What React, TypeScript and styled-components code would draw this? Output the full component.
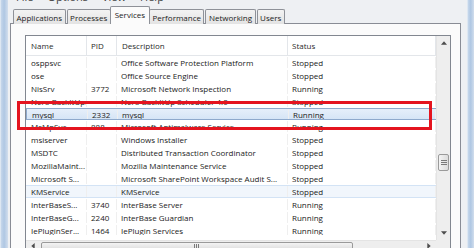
import styled, { createGlobalStyle, css } from "styled-components";

type Service = {
  name: string;
  pid: string;
  desc: string;
  status: string;
  state?: "selected" | "hover";
};

const services: Service[] = [
  { name: "osppsvc", pid: "", desc: "Office Software Protection Platform", status: "Stopped" },
  { name: "ose", pid: "", desc: "Office  Source Engine", status: "Stopped" },
  { name: "NisSrv", pid: "3772", desc: "Microsoft Network Inspection", status: "Running" },
  { name: "Nero BackItUp...", pid: "", desc: "Nero BackItUp Scheduler 4.0", status: "Stopped" },
  { name: "mysql", pid: "2332", desc: "mysql", status: "Running", state: "selected" },
  { name: "MsMpSvc", pid: "888", desc: "Microsoft Antimalware Service", status: "Running" },
  { name: "msiserver", pid: "", desc: "Windows Installer", status: "Stopped" },
  { name: "MSDTC", pid: "", desc: "Distributed Transaction Coordinator", status: "Stopped" },
  { name: "MozillaMaint...", pid: "", desc: "Mozilla Maintenance Service", status: "Stopped" },
  { name: "Microsoft S...", pid: "", desc: "Microsoft SharePoint Workspace Audit S...", status: "Stopped" },
  { name: "KMService", pid: "", desc: "KMService", status: "Stopped", state: "hover" },
  { name: "InterBaseS...", pid: "3740", desc: "InterBase Server", status: "Running" },
  { name: "InterBaseG...", pid: "2240", desc: "InterBase Guardian", status: "Running" },
  { name: "IePluginSer...", pid: "1464", desc: "IePlugin Services", status: "Running" },
];

const tabs = ["Applications", "Processes", "Services", "Performance", "Networking", "Users"];

const App = () => {
  return (
    <>
      <GlobalStyle />
      <Window>
        <FrameEdge $width={7} />
        <Main>
          <MenuStrip>
            <MenuItem>File</MenuItem>
            <MenuItem>Options</MenuItem>
            <MenuItem>View</MenuItem>
            <MenuItem>Help</MenuItem>
          </MenuStrip>
          <TabRow>
            {tabs.map((t) => (
              <Tab key={t} $active={t === "Services"}>
                {t}
              </Tab>
            ))}
          </TabRow>
          <Panel>
            <ListView>
              <ListArea>
                <HeaderRow>
                  <HeaderCell>Name</HeaderCell>
                  <HeaderCell>PID</HeaderCell>
                  <HeaderCell>Description</HeaderCell>
                  <HeaderCell>Status</HeaderCell>
                </HeaderRow>
                {services.map((s) => (
                  <Row key={s.name} $state={s.state}>
                    <Cell>{s.name}</Cell>
                    <Cell>{s.pid}</Cell>
                    <Cell>{s.desc}</Cell>
                    <Cell>{s.status}</Cell>
                  </Row>
                ))}
              </ListArea>
              <VScroll>
                <ArrowButton>
                  <Arrow viewBox="0 0 7 4">
                    <path d="M0 4 L3.5 0 L7 4 Z" />
                  </Arrow>
                </ArrowButton>
                <Track>
                  <VThumb>
                    <Grip viewBox="0 0 6 6">
                      <path d="M0 0.5 H6 M0 2.5 H6 M0 4.5 H6" />
                    </Grip>
                  </VThumb>
                </Track>
                <ArrowButton>
                  <Arrow viewBox="0 0 7 4">
                    <path d="M0 0 L7 0 L3.5 4 Z" />
                  </Arrow>
                </ArrowButton>
              </VScroll>
              <HScroll>
                <ArrowButton>
                  <SideArrow viewBox="0 0 4 7">
                    <path d="M4 0 L4 7 L0 3.5 Z" />
                  </SideArrow>
                </ArrowButton>
                <HThumb>
                  <Grip viewBox="0 0 6 6">
                    <path d="M0.5 0 V6 M2.5 0 V6 M4.5 0 V6" />
                  </Grip>
                </HThumb>
                <HTrack />
                <ArrowButton>
                  <SideArrow viewBox="0 0 4 7">
                    <path d="M0 0 L0 7 L4 3.5 Z" />
                  </SideArrow>
                </ArrowButton>
              </HScroll>
              <Corner />
            </ListView>
          </Panel>
        </Main>
        <FrameEdge $width={6} />
        {/* red annotation around the mysql row */}
        <Highlight />
      </Window>
    </>
  );
};

export default App;

const GlobalStyle = createGlobalStyle`
  html, body {
    margin: 0;
    padding: 0;
    overflow: hidden;
  }
  body {
    font-family: "Open Sans", "Noto Sans", sans-serif;
  }
`;

const Window = styled.div`
  position: relative;
  display: flex;
  width: 474px;
  height: 248px;
  overflow: hidden;
  background: #eef0f3;
  color: #222222;
  font-size: 8px;
`;

const FrameEdge = styled.div<{ $width: number }>`
  flex: 0 0 ${(p) => p.$width}px;
  background: linear-gradient(90deg, #c6d7eb 0%, #afc7e3 45%, #d2deed 100%);
  border-left: 1px solid #dde7f2;
`;

const Main = styled.div`
  flex: 1;
  min-width: 0;
  display: flex;
  flex-direction: column;
  padding: 0 6px 0 2px;
`;

const MenuStrip = styled.div`
  flex: none;
  height: 7px;
  overflow: hidden;
  display: flex;
  gap: 14px;
  padding-left: 6px;
`;

const MenuItem = styled.span`
  margin-top: -9px;
  font-size: 11px;
  line-height: 12px;
  color: #444;
`;

const TabRow = styled.div`
  flex: none;
  position: relative;
  z-index: 1;
  display: flex;
  align-items: flex-end;
  height: 17px;
  padding-left: 3px;
  margin-bottom: -1px;
`;

const Tab = styled.div<{ $active?: boolean }>`
  box-sizing: border-box;
  display: flex;
  align-items: center;
  height: 15px;
  padding: 0 2.5px;
  margin-right: 1px;
  border: 1px solid #8e9198;
  border-bottom: none;
  border-radius: 2px 2px 0 0;
  background: linear-gradient(#f3f3f3, #e3e3e3);
  white-space: nowrap;

  ${(p) =>
    p.$active &&
    css`
      height: 18px;
      margin: 0 0 0 -2px;
      padding: 0 4px 2px;
      background: #fbfbfb;
      & + div {
        margin-left: -1px;
      }
    `}
`;

const Panel = styled.div`
  flex: 1 0 auto;
  border: 1px solid #898c95;
  background: #fbfbfb;
  padding: 11px 9px 0 14px;
`;

const ListView = styled.div`
  box-sizing: border-box;
  height: 217px;
  display: grid;
  grid-template-columns: 1fr 14px;
  grid-template-rows: 1fr 11px;
  border: 1px solid #828790;
  background: #ffffff;
`;

const columns = "61px 30px 171px 1fr";

const ListArea = styled.div`
  overflow: hidden;
`;

const HeaderRow = styled.div`
  box-sizing: border-box;
  display: grid;
  grid-template-columns: ${columns};
  height: 20px;
  border-bottom: 1px solid #e3e6ea;
`;

const HeaderCell = styled.div`
  display: flex;
  align-items: center;
  padding-left: 5px;
  border-right: 1px solid #e3e6ea;
  color: #2b2b2b;
  white-space: nowrap;
  overflow: hidden;

  &:nth-child(2),
  &:nth-child(4) {
    padding-left: 4px;
  }
`;

const Row = styled.div<{ $state?: "selected" | "hover" }>`
  box-sizing: border-box;
  display: grid;
  grid-template-columns: ${columns};
  height: 12.9px;
  border-top: 1px solid transparent;
  border-bottom: 1px solid transparent;

  ${(p) =>
    p.$state === "selected" &&
    css`
      background: linear-gradient(#e6effa, #d6e5f6);
      border-color: #8ea9cc;
      border-left: 1px solid #8ea9cc;
    `}

  ${(p) =>
    p.$state === "hover" &&
    css`
      background: #f1f6fc;
      border-color: #d3e3f5;
    `}
`;

const Cell = styled.div`
  display: flex;
  align-items: center;
  padding-left: 5px;
  border-right: 1px solid #efefef;
  white-space: nowrap;
  overflow: hidden;

  &:nth-child(2),
  &:nth-child(3),
  &:nth-child(4) {
    padding-left: 4px;
  }
`;

const VScroll = styled.div`
  display: flex;
  flex-direction: column;
  background: #eeeeee;
  border-left: 1px solid #e4e4e4;
`;

const ArrowButton = styled.div`
  flex: 0 0 14px;
  display: flex;
  align-items: center;
  justify-content: center;
`;

const Arrow = styled.svg`
  width: 6px;
  height: 4px;
  fill: #4d4d4d;
`;

const SideArrow = styled.svg`
  width: 4px;
  height: 6px;
  fill: #4d4d4d;
`;

const Track = styled.div`
  flex: 1;
  display: flex;
  flex-direction: column;
  align-items: center;
`;

const VThumb = styled.div`
  box-sizing: border-box;
  width: 11px;
  height: 17px;
  margin-top: 104px;
  display: flex;
  align-items: center;
  justify-content: center;
  border: 1px solid #9a9a9a;
  border-radius: 2px;
  background: linear-gradient(90deg, #f4f4f4, #dcdcdc);
`;

const Grip = styled.svg`
  width: 6px;
  height: 6px;
  stroke: #7a7a7a;
  stroke-width: 1;
`;

const HScroll = styled.div`
  display: flex;
  align-items: stretch;
  background: #eeeeee;
  border-top: 1px solid #e4e4e4;
`;

const HThumb = styled.div`
  box-sizing: border-box;
  width: 312px;
  margin: 1px 0 0 1px;
  display: flex;
  align-items: center;
  justify-content: center;
  border: 1px solid #9a9a9a;
  border-radius: 2px;
  background: linear-gradient(#f4f4f4, #dcdcdc);
`;

const HTrack = styled.div`
  flex: 1;
`;

const Corner = styled.div`
  background: #eeeeee;
`;

const Highlight = styled.div`
  position: absolute;
  left: 17px;
  top: 101px;
  width: 415px;
  height: 29px;
  box-sizing: border-box;
  border: 3.5px solid #e4141f;
  pointer-events: none;
`;
